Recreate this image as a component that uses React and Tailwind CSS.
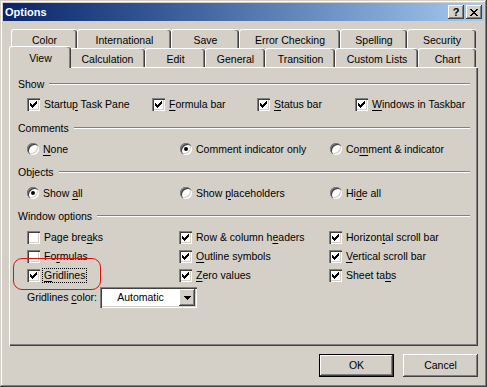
import React from "react";

const raised =
	"shadow-[inset_-1px_-1px_#404040,inset_1px_1px_#ffffff,inset_-2px_-2px_#808080,inset_2px_2px_#d4d0c8]";
const sunken =
	"shadow-[inset_1px_1px_#808080,inset_2px_2px_#404040,inset_-1px_-1px_#ffffff,inset_-2px_-2px_#d4d0c8]";

const backTabs = [
	{ label: "Color", w: "w-[66px]" },
	{ label: "International", w: "w-[94px]" },
	{ label: "Save", w: "w-[68px]" },
	{ label: "Error Checking", w: "w-[101px]" },
	{ label: "Spelling", w: "w-[67px]" },
	{ label: "Security", w: "w-[69px]" },
];

const frontTabs = [
	{ label: "Calculation", w: "w-[76px]" },
	{ label: "Edit", w: "w-[60px]" },
	{ label: "General", w: "w-[60px]" },
	{ label: "Transition", w: "w-[70px]" },
	{ label: "Custom Lists", w: "w-[83px]" },
	{ label: "Chart", w: "w-[58px]" },
];

// classic 7x7 check glyph, one column of 3 px per x
const checkCols = [2, 3, 4, 3, 2, 1, 0];

const Mn = ({ t, u }) => {
	if (u == null) return <>{t}</>;
	return (
		<>
			{t.slice(0, u)}
			<span className="underline underline-offset-[2px]">{t[u]}</span>
			{t.slice(u + 1)}
		</>
	);
};

const Check = ({ on }) => (
	<span className={`relative block w-[13px] h-[13px] shrink-0 bg-white ${sunken}`}>
		{on && (
			<svg
				className="absolute left-[3px] top-[3px]"
				width="7"
				height="7"
				viewBox="0 0 7 7"
				shapeRendering="crispEdges">
				{checkCols.map((y, x) => (
					<rect key={x} x={x} y={y} width="1" height="3" fill="#000" />
				))}
			</svg>
		)}
	</span>
);

const Radio = ({ on }) => (
	<span
		className={`relative flex items-center justify-center w-[12px] h-[12px] shrink-0 rounded-full bg-white ${sunken}`}>
		{on && <span className="block w-[4px] h-[4px] rounded-full bg-black" />}
	</span>
);

const Item = ({ kind, on, t, u, w, focus }) => (
	<div className={`flex items-center ${w || ""}`}>
		{kind === "radio" ? <Radio on={on} /> : <Check on={on} />}
		<span
			className={`ml-[2px] px-[1px] border whitespace-nowrap ${
				focus ? "border-dotted border-black" : "border-transparent"
			}`}>
			<Mn t={t} u={u} />
		</span>
	</div>
);

const Group = ({ title, className }) => (
	<div className={`flex items-center h-[20px] pl-[8px] pr-[8px] ${className || ""}`}>
		<span className="whitespace-nowrap">{title}</span>
		<div className="flex-1 ml-[5px] h-[2px] border-t border-b border-t-[#808080] border-b-white" />
	</div>
);

const App = () => {
	return (
		<div
			className={`w-[487px] h-[387px] p-[3px] flex flex-col bg-[#d4d0c8] text-black text-[10.5px] leading-[13px] font-['Liberation_Sans',Arial,sans-serif] relative overflow-hidden shadow-[inset_-1px_-1px_#404040,inset_1px_1px_#d4d0c8,inset_-2px_-2px_#808080,inset_2px_2px_#ffffff]`}>
			{/* title bar */}
			<div className="h-[18px] flex items-center bg-gradient-to-r from-[#0a246a] to-[#a6caf0] pl-[2px] pr-[2px]">
				<span className="text-white font-bold text-[11px] flex-1">Options</span>
				<div className={`w-[16px] h-[14px] bg-[#d4d0c8] flex items-center justify-center font-bold text-[11px] leading-none ${raised}`}>
					?
				</div>
				<div className={`ml-[2px] w-[16px] h-[14px] bg-[#d4d0c8] flex items-center justify-center ${raised}`}>
					<svg width="8" height="7" viewBox="0 0 8 7" shapeRendering="crispEdges">
						<path d="M0 0h2v1h-2zM6 0h2v1h-2zM1 1h2v1h-2zM5 1h2v1h-2zM2 2h4v1h-4zM3 3h2v1h-2zM2 4h4v1h-4zM1 5h2v1h-2zM5 5h2v1h-2zM0 6h2v1h-2zM6 6h2v1h-2z" fill="#000" />
					</svg>
				</div>
			</div>

			{/* tabs */}
			<div className="mt-[8px] ml-[8px] flex h-[19px]">
				{backTabs.map((tab) => (
					<div
						key={tab.label}
						className={`${tab.w} h-[19px] pt-[2px] flex items-center justify-center rounded-t-[3px] border-l border-t border-white shadow-[inset_-1px_0_#404040,inset_-2px_0_#808080]`}>
						{tab.label}
					</div>
				))}
			</div>
			<div className="ml-[8px] flex h-[19px] items-start">
				<div className="relative z-10 -ml-[2px] -mr-[2px] -mt-[2px] w-[62px] h-[22px] pt-[2px] flex items-center justify-center bg-[#d4d0c8] rounded-t-[3px] border-l border-t border-white shadow-[inset_-1px_0_#404040,inset_-2px_0_#808080]">
					View
				</div>
				{frontTabs.map((tab) => (
					<div
						key={tab.label}
						className={`${tab.w} h-[19px] pt-[2px] flex items-center justify-center rounded-t-[3px] border-l border-t border-white shadow-[inset_-1px_0_#404040,inset_-2px_0_#808080]`}>
						{tab.label}
					</div>
				))}
			</div>

			{/* panel */}
			<div className="ml-[6px] w-[469px] h-[279px] pt-[6px] flex flex-col border-l border-t border-white shadow-[inset_-1px_-1px_#404040,inset_-2px_-2px_#808080]">
				<Group title="Show" />
				<div className="flex items-center h-[20px] pl-[17px]">
					<Item t="Startup Task Pane" u={6} on w="w-[125px]" />
					<Item t="Formula bar" u={0} on w="w-[105px]" />
					<Item t="Status bar" u={0} on w="w-[98px]" />
					<Item t="Windows in Taskbar" u={0} on />
				</div>

				<Group title="Comments" className="mt-[4px]" />
				<div className="flex items-center h-[20px] mt-[1px] pl-[17px]">
					<Item kind="radio" t="None" u={0} w="w-[153px]" />
					<Item kind="radio" t="Comment indicator only" on w="w-[150px]" />
					<Item kind="radio" t="Comment & indicator" u={2} />
				</div>

				<Group title="Objects" className="mt-[3px]" />
				<div className="flex items-center h-[20px] mt-[1px] pl-[17px]">
					<Item kind="radio" t="Show all" u={5} on w="w-[153px]" />
					<Item kind="radio" t="Show placeholders" u={5} w="w-[150px]" />
					<Item kind="radio" t="Hide all" u={2} />
				</div>

				<Group title="Window options" className="mt-[3px]" />
				<div className="flex items-center h-[19px] mt-[2px] pl-[17px]">
					<Item t="Page breaks" u={8} w="w-[152px]" />
					<Item t="Row & column headers" u={14} on w="w-[150px]" />
					<Item t="Horizontal scroll bar" u={7} on />
				</div>
				<div className="flex items-center h-[19px] pl-[17px]">
					<Item t="Formulas" u={2} w="w-[152px]" />
					<Item t="Outline symbols" u={0} on w="w-[150px]" />
					<Item t="Vertical scroll bar" u={0} on />
				</div>
				<div className="flex items-center h-[19px] pl-[17px]">
					<Item t="Gridlines" u={0} on focus w="w-[152px]" />
					<Item t="Zero values" u={0} on w="w-[150px]" />
					<Item t="Sheet tabs" u={8} on />
				</div>
				<div className="flex items-center h-[21px] mt-[2px] pl-[17px]">
					<span className="w-[73px] whitespace-nowrap">
						<Mn t="Gridlines color:" u={10} />
					</span>
					<div className={`w-[97px] h-[21px] flex items-center bg-white p-[2px] ${sunken}`}>
						<span className="flex-1 text-center">Automatic</span>
						<div className={`w-[16px] h-[17px] bg-[#d4d0c8] flex items-center justify-center ${raised}`}>
							<svg width="7" height="4" viewBox="0 0 7 4" shapeRendering="crispEdges">
								<path d="M0 0h7v1h-7zM1 1h5v1h-5zM2 2h3v1h-3zM3 3h1v1h-1z" fill="#000" />
							</svg>
						</div>
					</div>
				</div>
			</div>

			{/* buttons */}
			<div className="mt-[8px] flex justify-end gap-[9px] pr-[6px]">
				<button className="w-[75px] h-[23px] border border-black shadow-[inset_-1px_-1px_#404040,inset_1px_1px_#ffffff,inset_-2px_-2px_#808080] bg-[#d4d0c8]">
					OK
				</button>
				<button className={`w-[75px] h-[23px] bg-[#d4d0c8] ${raised}`}>Cancel</button>
			</div>

			{/* red annotation around Gridlines */}
			<div className="absolute left-[13px] top-[258px] w-[88px] h-[32px] rounded-[9px] border border-[#e01010] pointer-events-none" />
		</div>
	);
};

export default App;
